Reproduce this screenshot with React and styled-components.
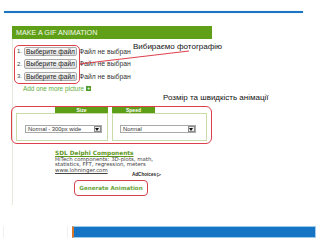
import React from 'react';
import styled, { createGlobalStyle } from 'styled-components';

const GlobalStyle = createGlobalStyle`
  html, body {
    margin: 0;
    padding: 0;
    background: #ffffff;
  }
  * {
    box-sizing: border-box;
  }
`;

const Slide = styled.div`
  position: relative;
  width: 320px;
  height: 240px;
  overflow: hidden;
  display: flex;
  flex-direction: column;
  background: #ffffff;
  font-family: "Liberation Sans", Arial, sans-serif;
`;

const TopRule = styled.div`
  margin: 11px 0 0 4px;
  width: 299px;
  height: 2px;
  background: #1d74c1;
  box-shadow: 0 0 1px #8fc0e8;
`;

const Panel = styled.div`
  margin: 13px 0 0 12px;
  width: 200px;
`;

const PanelHeader = styled.div`
  height: 13px;
  padding-left: 4px;
  background: #60a018;
  color: #f4faec;
  font-size: 7.2px;
  font-weight: normal;
  line-height: 13px;
  white-space: nowrap;
`;

const PanelBody = styled.div`
  height: 166px;
  padding: 6px 0 0 4px;
  border-left: 1px solid #e6eadb;
`;

const FileRow = styled.div`
  display: flex;
  align-items: center;
  height: 12.5px;
  color: #333333;
  white-space: nowrap;
`;

const RowNumber = styled.span`
  width: 7px;
  font-size: 6px;
  color: #444444;
`;

const FileButton = styled.span`
  display: flex;
  align-items: center;
  justify-content: center;
  width: 53px;
  height: 9.5px;
  border: 1px solid #a9a9a9;
  border-radius: 2px;
  background: linear-gradient(#f7f7f7, #dedede);
  color: #222222;
  font-size: 6.6px;
  white-space: nowrap;
`;

const FileStatus = styled.span`
  margin-left: 2px;
  font-size: 6.8px;
  color: #333333;
`;

const AddMore = styled.div`
  display: flex;
  align-items: center;
  gap: 2px;
  height: 8px;
  margin: 1.5px 0 0 6px;
  color: #5fae3a;
  font-size: 6.4px;
  white-space: nowrap;
`;

const PlusBox = styled.span`
  display: inline-flex;
  align-items: center;
  justify-content: center;
  width: 5px;
  height: 5px;
  background: #4f9d2a;
  color: #ffffff;
  font-size: 5px;
  font-weight: bold;
  line-height: 5px;
`;

const Options = styled.div`
  display: flex;
  gap: 4px;
  margin: 15px 0 0 -1px;
`;

const OptionBox = styled.div`
  display: flex;
  flex-direction: column;
  align-items: ${(p) => (p.$tabRight ? 'flex-end' : 'flex-start')};
  width: ${(p) => p.$width}px;
`;

const OptionTab = styled.div`
  width: ${(p) => p.$width}px;
  height: 6px;
  background: #5e9e16;
  color: #ffffff;
  font-size: 5px;
  font-weight: bold;
  line-height: 6px;
  text-align: center;
`;

const OptionFrame = styled.div`
  width: 100%;
  height: 28px;
  padding: 11px 0 0 ${(p) => p.$pad}px;
  border: 1px solid #c9dba8;
`;

const SelectBox = styled.div`
  display: flex;
  align-items: center;
  justify-content: space-between;
  width: ${(p) => p.$width}px;
  height: 8px;
  padding-left: 2px;
  border: 1px solid #a8a8a8;
  background: #ffffff;
  color: #333333;
  font-size: 5.8px;
  white-space: nowrap;
`;

const SelectArrow = styled.span`
  display: flex;
  align-items: center;
  justify-content: center;
  width: 7px;
  height: 6px;
  margin-right: 0.5px;
  border: 1px solid #8c8c8c;
  background: #ececec;
`;

const Ad = styled.div`
  margin: 9px 0 0 38px;
  width: 110px;
  font-family: "DejaVu Sans", Verdana, sans-serif;
`;

const AdTitle = styled.div`
  color: #5e981a;
  font-size: 5.8px;
  font-weight: bold;
  line-height: 6.5px;
  text-decoration: underline;
  white-space: nowrap;
`;

const AdLine = styled.div`
  color: #444444;
  font-size: 5.4px;
  line-height: 5.8px;
  white-space: nowrap;
  text-decoration: ${(p) => (p.$link ? 'underline' : 'none')};
`;

const AdChoices = styled.div`
  margin: -1.5px 0 0 77px;
  color: #222222;
  font-family: "Liberation Sans", Arial, sans-serif;
  font-size: 4.6px;
  font-weight: bold;
  white-space: nowrap;
`;

const GenerateButton = styled.div`
  display: flex;
  align-items: center;
  justify-content: center;
  width: 74px;
  height: 16px;
  margin: 3px 0 0 57px;
  border: 1.3px solid #d8414c;
  border-radius: 4px;
  background: #ffffff;
  color: #6aa63c;
  font-family: "DejaVu Sans", Verdana, sans-serif;
  font-size: 5.6px;
  font-weight: bold;
  white-space: nowrap;
`;

const Footer = styled.div`
  display: flex;
  gap: 4px;
  height: 12px;
  margin: auto 0 2px 3px;
`;

const FooterBlank = styled.div`
  width: 65px;
  border-left: 1px solid #edf1f5;
  border-right: 1px solid #edf1f5;
`;

const FooterBar = styled.div`
  width: 244px;
  border: 1px solid #9fcbed;
  border-left: 2px solid #d8772a;
  background: #1574c4;
`;

const Outline = styled.div`
  position: absolute;
  left: ${(p) => p.$x}px;
  top: ${(p) => p.$y}px;
  width: ${(p) => p.$w}px;
  height: ${(p) => p.$h}px;
  border: 1.3px solid #de3f4b;
  border-radius: ${(p) => p.$r}px;
  pointer-events: none;
`;

const Callout = styled.div`
  position: absolute;
  left: ${(p) => p.$x}px;
  top: ${(p) => p.$y}px;
  color: #111111;
  font-size: 8px;
  white-space: nowrap;
`;

const Pointer = styled.svg`
  position: absolute;
  left: 0;
  top: 0;
`;

const files = [1, 2, 3];

export default function App() {
  return (
    <>
      <GlobalStyle />
      <Slide>
        <TopRule />
        <Panel>
          <PanelHeader>MAKE A GIF ANIMATION</PanelHeader>
          <PanelBody>
            {files.map((n) => (
              <FileRow key={n}>
                <RowNumber>{n}.</RowNumber>
                <FileButton>Выберите файл</FileButton>
                <FileStatus>Файл не выбран</FileStatus>
              </FileRow>
            ))}
            <AddMore>
              Add one more picture <PlusBox>+</PlusBox>
            </AddMore>
            <Options>
              <OptionBox $width={92} $tabRight>
                <OptionTab $width={53}>Size</OptionTab>
                <OptionFrame $pad={8}>
                  <SelectBox $width={77}>
                    Normal - 300px wide
                    <SelectArrow>
                      <svg width="4" height="3" viewBox="0 0 4 3">
                        <path d="M0 0h4L2 3z" fill="#111" />
                      </svg>
                    </SelectArrow>
                  </SelectBox>
                </OptionFrame>
              </OptionBox>
              <OptionBox $width={95}>
                <OptionTab $width={43}>Speed</OptionTab>
                <OptionFrame $pad={7}>
                  <SelectBox $width={76}>
                    Normal
                    <SelectArrow>
                      <svg width="4" height="3" viewBox="0 0 4 3">
                        <path d="M0 0h4L2 3z" fill="#111" />
                      </svg>
                    </SelectArrow>
                  </SelectBox>
                </OptionFrame>
              </OptionBox>
            </Options>
            <Ad>
              <AdTitle>SDL Delphi Components</AdTitle>
              <AdLine>HiTech components: 3D-plots, math,</AdLine>
              <AdLine>statistics, FFT, regression, meters</AdLine>
              <AdLine $link>www.lohninger.com</AdLine>
              <AdChoices>AdChoices ▷</AdChoices>
            </Ad>
            <GenerateButton>Generate Animation</GenerateButton>
          </PanelBody>
        </Panel>
        <Footer>
          <FooterBlank />
          <FooterBar />
        </Footer>

        <Outline $x={14} $y={45} $w={66} $h={39} $r={5} />
        <Outline $x={11} $y={106} $w={201} $h={38} $r={6} />
        <Pointer width="320" height="240" viewBox="0 0 320 240">
          <line x1="79" y1="64" x2="189" y2="51" stroke="#de3f4b" strokeWidth="1" />
        </Pointer>
        <Callout $x={133} $y={42}>Вибираємо фотографію</Callout>
        <Callout $x={163} $y={93}>Розмір та швидкість анімації</Callout>
      </Slide>
    </>
  );
}
